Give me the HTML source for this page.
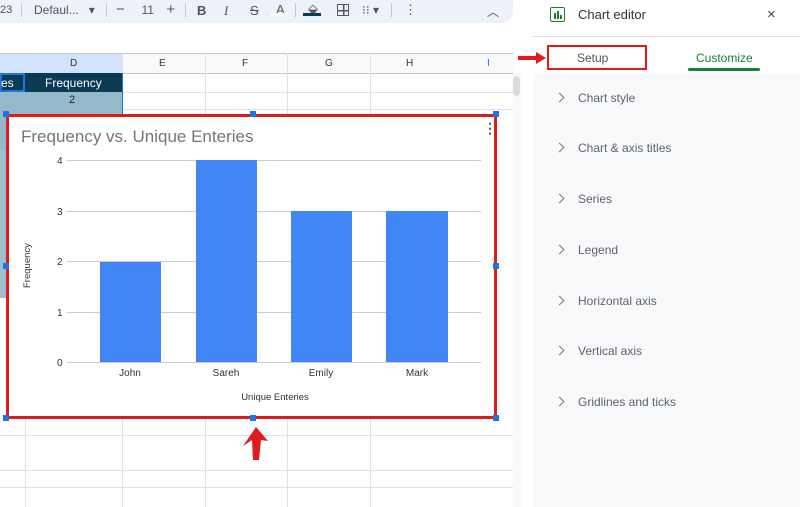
<!DOCTYPE html>
<html><head><style>
*{margin:0;padding:0;box-sizing:border-box}
body{width:800px;height:507px;overflow:hidden;background:#fff;font-family:"Liberation Sans",Arial,sans-serif;position:relative}
.a{position:absolute}
.hl{position:absolute;height:1px;background:#e1e1e1}
.vl{position:absolute;width:1px;background:#e1e1e1}
.tb{font-size:13px;color:#555}
.mi{position:absolute;left:578px;font-size:12px;color:#5f6368}
.ch{position:absolute;left:556px;width:7px;height:7px;border-right:1.3px solid #777;border-top:1.3px solid #777;transform:rotate(45deg)}
</style></head><body>
<div class="a" style="left:0;top:0;width:513px;height:23px;background:#edf2fa;border-radius:0 0 12px 0"></div>
<div class="a tb" style="left:0;top:4px;font-size:11px;color:#555">23</div>
<div class="a" style="left:21px;top:3px;width:1px;height:14px;background:#c7c7c7"></div>
<div class="a tb" style="left:34px;top:3px;font-size:12px">Defaul...&nbsp;&nbsp;&nbsp;▾</div>
<div class="a" style="left:106px;top:3px;width:1px;height:14px;background:#c7c7c7"></div>
<div class="a tb" style="left:116px;top:1px;font-size:15px">−&nbsp;&nbsp;&nbsp;&nbsp;<span style="font-size:12px">11</span>&nbsp;&nbsp;&nbsp;+</div>
<div class="a" style="left:185px;top:3px;width:1px;height:14px;background:#c7c7c7"></div>
<div class="a tb" style="left:197px;top:3px;font-weight:bold">B</div>
<div class="a tb" style="left:224px;top:3px;font-style:italic;font-family:'Liberation Serif'">I</div>
<div class="a tb" style="left:250px;top:3px;text-decoration:line-through">S</div>
<div class="a tb" style="left:276px;top:2px">A</div>
<div class="a" style="left:271px;top:13px;width:17px;height:3px;background:#fff"></div>
<div class="a" style="left:295px;top:3px;width:1px;height:14px;background:#c7c7c7"></div>
<div class="a tb" style="left:308px;top:1px">⬙</div>
<div class="a" style="left:303px;top:13px;width:18px;height:3px;background:#0b3a55"></div>
<div class="a" style="left:337px;top:4px;width:12px;height:12px;border:1.5px solid #555;background:linear-gradient(#555,#555) 4.5px 0/1.5px 100% no-repeat,linear-gradient(#555,#555) 0 4.5px/100% 1.5px no-repeat"></div>
<div class="a tb" style="left:362px;top:3px;font-size:12px">⁝⁝ ▾</div>
<div class="a" style="left:391px;top:3px;width:1px;height:14px;background:#c7c7c7"></div>
<div class="a tb" style="left:404px;top:2px">⋮</div>
<div class="a tb" style="left:487px;top:3px;font-size:12px">︿</div>
<div class="a" style="left:0;top:53px;width:513px;height:20px;background:#f8f9fa"></div>
<div class="a" style="left:0;top:53px;width:122px;height:20px;background:#d3e3fd"></div>
<div class="hl" style="left:0;top:53px;width:513px;background:#c4c7c5"></div>
<div class="hl" style="left:0;top:73px;width:513px;background:#c4c7c5"></div>
<div class="a" style="left:70px;top:58px;font-size:10px;color:#333">D</div>
<div class="a" style="left:159px;top:58px;font-size:10px;color:#333">E</div>
<div class="a" style="left:242px;top:58px;font-size:10px;color:#333">F</div>
<div class="a" style="left:325px;top:58px;font-size:10px;color:#333">G</div>
<div class="a" style="left:406px;top:58px;font-size:10px;color:#333">H</div>
<div class="a" style="left:487px;top:58px;font-size:10px;color:#1a73e8">I</div>
<div class="vl" style="left:25px;top:53px;height:454px"></div>
<div class="vl" style="left:122px;top:53px;height:454px"></div>
<div class="vl" style="left:205px;top:53px;height:454px"></div>
<div class="vl" style="left:287px;top:53px;height:454px"></div>
<div class="vl" style="left:370px;top:53px;height:454px"></div>
<div class="hl" style="left:0;top:92px;width:513px"></div>
<div class="hl" style="left:0;top:109px;width:513px"></div>
<div class="hl" style="left:0;top:435px;width:513px"></div>
<div class="hl" style="left:0;top:470px;width:513px"></div>
<div class="hl" style="left:0;top:487px;width:513px"></div>
<div class="a" style="left:0;top:73px;width:122px;height:19px;background:#0b3a55"></div>
<div class="a" style="left:0;top:73px;width:25px;height:19px;border:2px solid #1a73e8"></div>
<div class="a" style="left:1px;top:76px;font-size:12px;color:#fff">es</div>
<div class="a" style="left:45px;top:76px;font-size:12px;color:#fff">Frequency</div>
<div class="a" style="left:0;top:92px;width:122px;height:206px;background:#93b9cb"></div>
<div class="a" style="left:0;top:150px;width:122px;height:148px;background:#9fc0ce"></div>
<div class="a" style="left:69px;top:94px;font-size:11px;color:#222">2</div>
<div class="a" style="left:122px;top:73px;width:1px;height:225px;background:#1a73e8"></div>
<div class="a" style="left:513px;top:73px;width:8px;height:434px;background:#f8f9fa"></div>
<div class="a" style="left:513px;top:76px;width:7px;height:20px;background:#dadce0;border-radius:4px"></div>
<div class="a" style="left:6px;top:114px;width:491px;height:305px;background:#fff;border:3px solid #e01b1b"></div>
<div class="a" style="left:21px;top:127px;font-size:17px;color:#757575">Frequency vs. Unique Enteries</div>
<div class="a" style="left:483px;top:120px;font-size:14px;color:#555;font-weight:bold">⋮</div>
<svg class="a" style="left:0;top:0" width="520" height="507">
<g stroke="#ccc" stroke-width="1">
<line x1="67" y1="160.5" x2="481" y2="160.5"/><line x1="67" y1="211.5" x2="481" y2="211.5"/><line x1="67" y1="261.5" x2="481" y2="261.5"/><line x1="67" y1="312.5" x2="481" y2="312.5"/><line x1="67" y1="362.5" x2="481" y2="362.5"/>
</g>
<g fill="#4285f4">
<rect x="100" y="262" width="61" height="100"/><rect x="196" y="160" width="61" height="202"/><rect x="291" y="211" width="61" height="151"/><rect x="386" y="211" width="62" height="151"/>
</g>
<g font-family="Liberation Sans" font-size="10" fill="#333">
<text x="57" y="164">4</text><text x="57" y="215">3</text><text x="57" y="265">2</text><text x="57" y="316">1</text><text x="57" y="366">0</text>
<text x="130" y="376" text-anchor="middle">John</text><text x="226" y="376" text-anchor="middle">Sareh</text><text x="321" y="376" text-anchor="middle">Emily</text><text x="417" y="376" text-anchor="middle">Mark</text>
<text x="275" y="400" text-anchor="middle" font-size="9.5">Unique Enteries</text>
<text transform="translate(30,288) rotate(-90)" font-size="9.5">Frequency</text>
</g>
<g fill="#1a73e8">
<rect x="3" y="111" width="6" height="6"/><rect x="250" y="111" width="6" height="6"/><rect x="493" y="111" width="6" height="6"/>
<rect x="3" y="263" width="6" height="6"/><rect x="493" y="263" width="6" height="6"/>
<rect x="3" y="415" width="6" height="6"/><rect x="250" y="415" width="6" height="6"/><rect x="493" y="415" width="6" height="6"/>
</g>
<path d="M256 427 L268 441 L261 440 L259 460 L253 460 L252 440 L243 446 Z" fill="#e01b1b"/>
</svg>
<div class="a" style="left:533px;top:0;width:267px;height:507px;background:#f8f9fa"></div>
<div class="a" style="left:533px;top:0;width:267px;height:73px;background:#fff"></div>
<div class="hl" style="left:533px;top:36px;width:267px;background:#e0e0e0"></div>
<div class="a" style="left:550px;top:7px;width:15px;height:15px;border:1.5px solid #188038;border-radius:2px"></div>
<div class="a" style="left:554px;top:13px;width:1.5px;height:6px;background:#188038"></div>
<div class="a" style="left:557px;top:11px;width:1.5px;height:8px;background:#188038"></div>
<div class="a" style="left:560px;top:15px;width:1.5px;height:4px;background:#188038"></div>
<div class="a" style="left:578px;top:7px;font-size:13px;color:#333">Chart editor</div>
<div class="a" style="left:767px;top:6px;font-size:15px;color:#444">×</div>
<div class="a" style="left:547px;top:45px;width:100px;height:25px;border:2px solid #e01b1b"></div>
<div class="a" style="left:577px;top:51px;font-size:12px;color:#555">Setup</div>
<div class="a" style="left:696px;top:51px;font-size:12px;color:#188038">Customize</div>
<div class="a" style="left:688px;top:68px;width:72px;height:3px;background:#188038;border-radius:2px"></div>
<svg class="a" style="left:518px;top:50px" width="30" height="16"><path d="M0 6 H18 V2 L28 8 L18 14 V10 H0 Z" fill="#e01b1b"/></svg>
<div class="ch" style="top:94px"></div><div class="mi" style="top:91px">Chart style</div>
<div class="ch" style="top:144px"></div><div class="mi" style="top:141px">Chart &amp; axis titles</div>
<div class="ch" style="top:195px"></div><div class="mi" style="top:192px">Series</div>
<div class="ch" style="top:246px"></div><div class="mi" style="top:243px">Legend</div>
<div class="ch" style="top:297px"></div><div class="mi" style="top:294px">Horizontal axis</div>
<div class="ch" style="top:347px"></div><div class="mi" style="top:344px">Vertical axis</div>
<div class="ch" style="top:398px"></div><div class="mi" style="top:395px">Gridlines and ticks</div>
</body></html>
